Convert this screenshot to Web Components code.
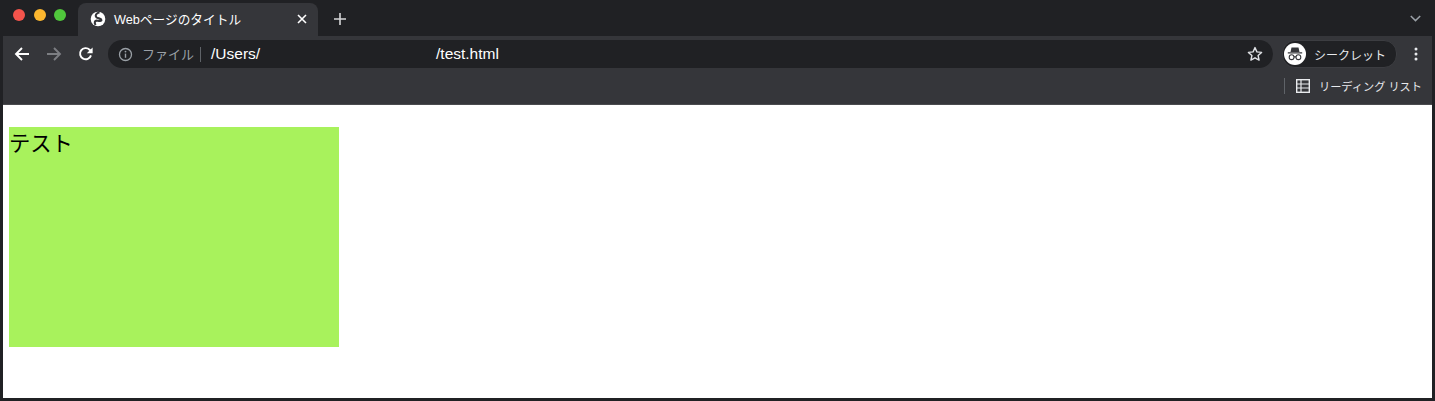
<!DOCTYPE html>
<html lang="ja">
<head>
<meta charset="utf-8">
<title>Webページのタイトル</title>
<style>
  html, body { margin: 0; height: 401px; overflow: hidden; background: #202124; }
  body { font-family: "Liberation Sans", "Noto Sans CJK JP", sans-serif; }
</style>
</head>
<body>
<browser-window>
  <tab-strip title-text="Webページのタイトル"></tab-strip>
  <browser-toolbar></browser-toolbar>
  <bookmark-bar></bookmark-bar>
  <test-page>テスト</test-page>
</browser-window>

<script>
class BrowserWindow extends HTMLElement {
  constructor() {
    super();
    this.attachShadow({ mode: 'open' });
    this.shadowRoot.innerHTML = `
      <style>
        :host {
          display: flex;
          flex-direction: column;
          box-sizing: border-box;
          height: 401px;
          padding: 0 3px 3px;
          background: #202124;
        }
      </style>
      <slot></slot>
    `;
  }
}

class TabStrip extends HTMLElement {
  constructor() {
    super();
    this.attachShadow({ mode: 'open' });
    this.shadowRoot.innerHTML = `
      <style>
        :host {
          display: flex;
          align-items: flex-end;
          height: 36px;
          flex: none;
          color: #fff;
          font-size: 12.7px;
        }
        .lights {
          display: flex;
          gap: 8.5px;
          align-self: flex-start;
          width: 75px;
          box-sizing: border-box;
          padding: 9px 0 0 10px;
        }
        .lights i { width: 12px; height: 12px; border-radius: 50%; display: block; }
        .tab {
          display: flex;
          align-items: center;
          box-sizing: border-box;
          width: 240px;
          height: 33px;
          padding: 0 11px 1px 12px;
          background: #35363a;
          border-radius: 8px 8px 0 0;
        }
        .tab .title { margin: 0 0 1px 8px; flex: 1; white-space: nowrap; }
        .tab svg { display: block; flex: none; }
        .new { margin: 0 0 11px 16px; display: block; }
        .spacer { flex: 1; }
        .chev { margin: 0 11px 14px 0; display: block; }
      </style>
      <div class="lights">
        <i style="background:#f4544c"></i>
        <i style="background:#fcb72f"></i>
        <i style="background:#50c73c"></i>
      </div>
      <div class="tab">
        <svg width="16" height="16" viewBox="0 0 16 16">
          <circle cx="8" cy="8" r="7.300" fill="#fff"/>
          <path d="M9.500 1.200C6 2.400 4.800 4.600 6.400 6.200 8 7.600 11.200 7 11.400 9 11.500 10.400 8.600 9.800 6.800 9.600 4.800 9.500 4 11.600 5.600 14" fill="none" stroke="#35363a" stroke-width="2.100"/>
        </svg>
        <span class="title"></span>
        <svg width="10" height="10" viewBox="0 0 10 10"><path d="M1 1l8 8M9 1L1 9" stroke="#fff" stroke-width="1.600"/></svg>
      </div>
      <svg class="new" width="12" height="12" viewBox="0 0 12 12"><path d="M6 0v12M0 6h12" stroke="#d5d6d8" stroke-width="1.600"/></svg>
      <div class="spacer"></div>
      <svg class="chev" width="11" height="7" viewBox="0 0 11 7"><path d="M.8 1l4.700 4.600L10.200 1" fill="none" stroke="#9aa0a6" stroke-width="1.500"/></svg>
    `;
    this.shadowRoot.querySelector('.title').textContent = this.getAttribute('title-text');
  }
}

class BrowserToolbar extends HTMLElement {
  constructor() {
    super();
    this.attachShadow({ mode: 'open' });
    this.shadowRoot.innerHTML = `
      <style>
        :host {
          display: flex;
          align-items: center;
          height: 36px;
          flex: none;
          box-sizing: border-box;
          padding: 0 14px 0 11px;
          background: #35363a;
          color: #fff;
          font-size: 15.5px;
        }
        svg { display: block; flex: none; }
        .nav { display: flex; align-items: center; gap: 16px; margin-right: 14px; }
        .omnibox {
          flex: 1;
          display: flex;
          align-items: center;
          height: 28px;
          border-radius: 14px;
          background: #202124;
          padding: 0 10px;
        }
        .scheme { margin-left: 9px; color: #9aa0a6; font-size: 13px; padding-right: 6px; border-right: 1px solid #5f6368; line-height: 15px; }
        .path { margin-left: 10px; width: 225px; white-space: nowrap; }
        .file { flex: 1; white-space: nowrap; }
        .chip {
          display: flex;
          align-items: center;
          height: 26px;
          margin-left: 9px;
          padding: 0 10px 0 1px;
          border-radius: 13px;
          background: #202124;
          border: 1px solid #3c3d41;
          font-size: 12px;
          gap: 8px;
          color: #e8eaed;
        }
        .dots { margin-left: 17px; }
      </style>
      <div class="nav">
        <svg width="16" height="16" viewBox="0 0 16 16"><path d="M15 8H2M8 2L2 8l6 6" fill="none" stroke="#fff" stroke-width="1.900"/></svg>
        <svg width="16" height="16" viewBox="0 0 16 16"><path d="M1 8h13M8 2l6 6-6 6" fill="none" stroke="#7c7e82" stroke-width="1.900"/></svg>
        <svg width="16" height="16" viewBox="0 0 16 16"><path d="M13 9.400A5.600 5.600 0 1 1 11.600 3.700L13.600 5.600" fill="none" stroke="#fff" stroke-width="1.900"/><path d="M14.600 1.400v5.800H8.800z" fill="#fff"/></svg>
      </div>
      <div class="omnibox">
        <svg width="15" height="15" viewBox="0 0 15 15"><circle cx="7.500" cy="7.500" r="6" fill="none" stroke="#9aa0a6" stroke-width="1.300"/><path d="M7.500 6.600v4.200" stroke="#9aa0a6" stroke-width="1.400"/><circle cx="7.500" cy="4.600" r=".9" fill="#9aa0a6"/></svg>
        <span class="scheme">ファイル</span>
        <span class="path">/Users/</span>
        <span class="file">/test.html</span>
        <svg width="16" height="16" viewBox="0 0 16 16"><path d="M8 1.600l1.900 4.300 4.700.5-3.500 3.100 1 4.600L8 11.800l-4.100 2.300 1-4.600L1.400 6.400l4.700-.5z" fill="none" stroke="#dfe1e5" stroke-width="1.400" stroke-linejoin="round"/></svg>
      </div>
      <div class="chip">
        <svg width="22" height="22" viewBox="0 0 22 22">
          <circle cx="11" cy="11" r="11" fill="#fff"/>
          <path d="M7.500 4.500h7l1 4.500h-9zM3.800 9.200h14.400v1.200H3.800z" fill="#35363a"/>
          <circle cx="7.600" cy="14.200" r="2.400" fill="none" stroke="#35363a" stroke-width="1.100"/>
          <circle cx="14.400" cy="14.200" r="2.400" fill="none" stroke="#35363a" stroke-width="1.100"/>
          <path d="M10 13.900h2" stroke="#35363a" stroke-width="1.100"/>
        </svg>
        <span>シークレット</span>
      </div>
      <svg class="dots" width="4" height="14" viewBox="0 0 4 14"><circle cx="2" cy="2" r="1.500" fill="#e8eaed"/><circle cx="2" cy="7" r="1.500" fill="#e8eaed"/><circle cx="2" cy="12" r="1.500" fill="#e8eaed"/></svg>
    `;
  }
}

class BookmarkBar extends HTMLElement {
  constructor() {
    super();
    this.attachShadow({ mode: 'open' });
    this.shadowRoot.innerHTML = `
      <style>
        :host {
          display: flex;
          align-items: center;
          justify-content: flex-end;
          height: 33px;
          flex: none;
          box-sizing: border-box;
          padding: 0 10px 5px 0;
          background: #35363a;
          border-bottom: 1px solid #4a4b4e;
          color: #e8eaed;
          font-size: 11.2px;
        }
        .sep { width: 1px; height: 16px; background: #5f6368; margin-right: 11px; }
        svg { display: block; margin-right: 9px; }
      </style>
      <div class="sep"></div>
      <svg width="14" height="14" viewBox="0 0 14 14">
        <rect x=".7" y=".7" width="12.600" height="12.600" fill="none" stroke="#e8eaed" stroke-width="1.400"/>
        <path d="M1 5h12M1 9h12M5 1v12" stroke="#e8eaed" stroke-width="1.200"/>
      </svg>
      <span>リーディング リスト</span>
    `;
  }
}

class TestPage extends HTMLElement {
  constructor() {
    super();
    this.attachShadow({ mode: 'open' });
    this.shadowRoot.innerHTML = `
      <style>
        :host {
          display: block;
          flex: 1;
          background: #fff;
          padding: 22px 6px 0;
        }
        .box {
          width: 330px;
          height: 220px;
          background: #a8f25c;
          color: #000;
          font: 21.300px/30px "Noto Sans CJK JP", sans-serif;
        }
      </style>
      <div class="box"><slot></slot></div>
    `;
  }
}

customElements.define('browser-window', BrowserWindow);
customElements.define('tab-strip', TabStrip);
customElements.define('browser-toolbar', BrowserToolbar);
customElements.define('bookmark-bar', BookmarkBar);
customElements.define('test-page', TestPage);
</script>
</body>
</html>
